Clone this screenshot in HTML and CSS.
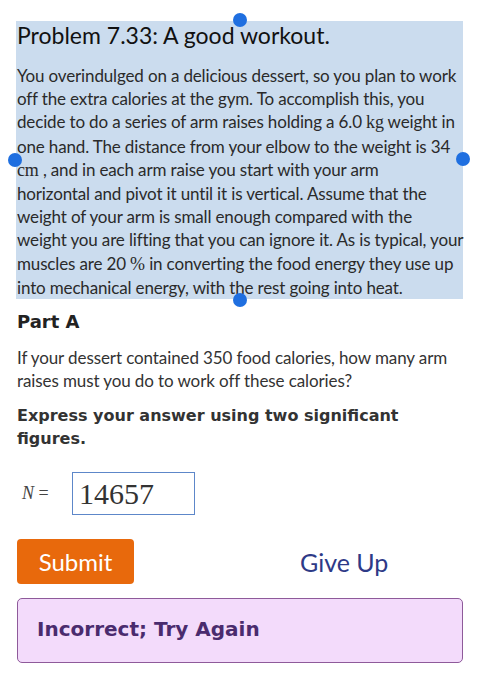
FILE: index.html
```html
<!DOCTYPE html>
<html lang="en">
<head>
  <meta charset="UTF-8">
  <title>Problem 7.33</title>
  <meta name="viewport" content="width=device-width, initial-scale=1">
  <link rel="stylesheet" href="styles.css">
</head>
<body>
  <div class="page">
    <div class="problem">
      <span class="handle handle-top"></span>
      <span class="handle handle-left"></span>
      <span class="handle handle-right"></span>
      <span class="handle handle-bottom"></span>
      <h2>Problem 7.33: A good workout.</h2>
      <p>You overindulged on a delicious dessert, so you plan to work<br>
      off the extra calories at the gym. To accomplish this, you<br>
      decide to do a series of arm raises holding a 6.0 <span class="unit">kg</span> weight in<br>
      one hand. The distance from your elbow to the weight is 34<br>
      <span class="unit">cm</span> , and in each arm raise you start with your arm<br>
      horizontal and pivot it until it is vertical. Assume that the<br>
      weight of your arm is small enough compared with the<br>
      weight you are lifting that you can ignore it. As is typical, your<br>
      muscles are 20 <span class="unit">%</span> in converting the food energy they use up<br>
      into mechanical energy, with the rest going into heat.</p>
    </div>

    <h3>Part A</h3>
    <p class="question">If your dessert contained 350 food calories, how many arm raises must you do to work off these calories?</p>
    <p class="hint">Express your answer using two significant figures.</p>

    <div class="answer">
      <span class="label"><i>N</i> =</span>
      <input type="text" value="14657">
    </div>

    <div class="actions">
      <button class="submit">Submit</button>
      <a class="give-up" href="#">Give Up</a>
    </div>

    <div class="feedback">Incorrect; Try Again</div>
  </div>
</body>
</html>
```

FILE: styles.css
```css
body {
  margin: 0;
  padding: 0;
  background: #fff;
  color: #222;
  font-family: Lato, 'Open Sans', sans-serif;
}

.page {
  padding: 21px 16px 0 16px;
}

.problem {
  position: relative;
  background: #cbdcee;
  padding: 1px 0 0 1px;
}

.problem h2 {
  margin: 0 0 15px;
  font-size: 23px;
  line-height: 27px;
  font-weight: normal;
  color: #111;
}

.problem p {
  margin: 0;
  font-size: 17px;
  line-height: 23.2px;
  letter-spacing: -0.15px;
  white-space: nowrap;
  color: #2a2a2a;
}

.unit {
  font-family: 'Liberation Serif', serif;
  font-size: 18px;
}

/* selection handles */
.handle {
  position: absolute;
  width: 14px;
  height: 14px;
  border-radius: 50%;
  background: #1f6fe0;
}
.handle-top { top: -8px; left: 217px; }
.handle-left { top: 132px; left: -8px; }
.handle-right { top: 131px; right: -7px; }
.handle-bottom { bottom: -8px; left: 217px; }

h3 {
  margin: 12px 0 0 1px;
  font-family: 'DejaVu Sans', sans-serif;
  font-size: 18px;
  line-height: 22px;
  font-weight: bold;
  color: #222;
}

.question {
  margin: 13px 0 0 1px;
  font-size: 17px;
  line-height: 23px;
  letter-spacing: -0.1px;
  color: #333;
}

.hint {
  margin: 12px 0 0 1px;
  max-width: 400px;
  font-family: 'DejaVu Sans', sans-serif;
  font-size: 16px;
  line-height: 23px;
  font-weight: bold;
  color: #333;
}

.answer {
  display: flex;
  align-items: center;
  margin: 22px 0 0 0;
}

.answer .label {
  font-family: 'Liberation Serif', serif;
  font-size: 18px;
  color: #444;
  width: 56px;
  padding-left: 6px;
  box-sizing: border-box;
}

.answer input {
  width: 123px;
  height: 43px;
  box-sizing: border-box;
  border: 1px solid #5d87c9;
  padding: 0 6px;
  font-family: 'Liberation Serif', serif;
  font-size: 30px;
  color: #333;
}

.actions {
  display: flex;
  align-items: center;
  margin-top: 24px;
}

.submit {
  width: 117px;
  height: 45px;
  background: #e8690c;
  border: none;
  border-radius: 4px;
  color: #fff;
  font-family: Lato, sans-serif;
  font-size: 24px;
  margin-left: 1px;
}

.give-up {
  margin-left: 166px;
  font-size: 25px;
  color: #2e3a87;
  text-decoration: none;
}

.feedback {
  margin-top: 14px;
  margin-left: 1px;
  height: 65px;
  box-sizing: border-box;
  border: 1px solid #8e5a9a;
  border-radius: 5px;
  background: #f3dbfb;
  padding: 18px 19px 0;
  font-family: 'DejaVu Sans', sans-serif;
  font-size: 20px;
  font-weight: bold;
  color: #4a2b6e;
}
```
